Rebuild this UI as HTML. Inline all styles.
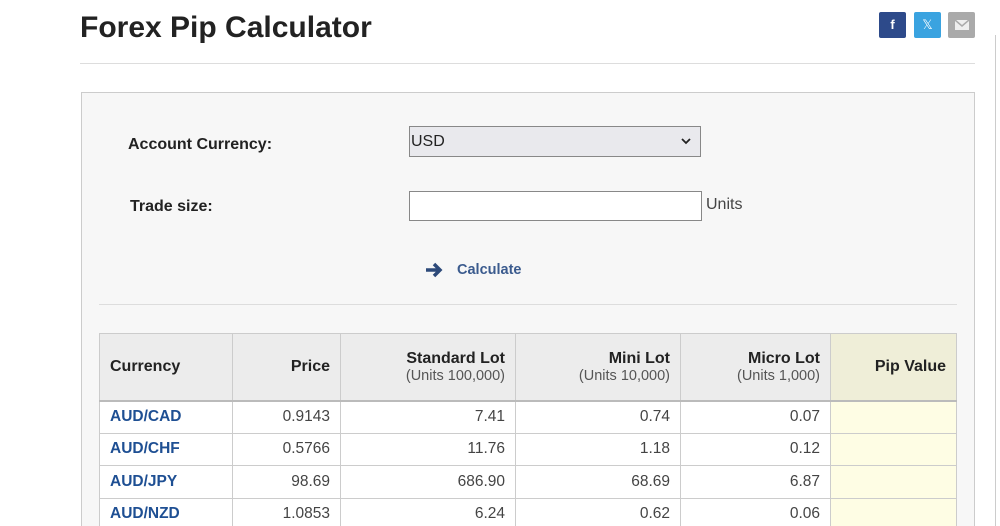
<!DOCTYPE html>
<html><head><style>
*{margin:0;padding:0;box-sizing:border-box}
html,body{width:1000px;height:526px;overflow:hidden}
body{background:#fff;font-family:"Liberation Sans",Arial,sans-serif;position:relative}
.abs{position:absolute}
h1{position:absolute;left:80px;top:11px;font-size:30px;font-weight:bold;color:#222}
.soc{position:absolute;top:12px;width:27px;height:26px;border-radius:2px;color:#fff;font-size:13px;font-weight:bold;text-align:center;line-height:26px}
.panel{position:absolute;left:81px;top:92px;width:894px;height:450px;background:#f7f7f7;border:1px solid #ccc}
.lbl{position:absolute;font-size:16px;font-weight:bold;color:#222}
table{position:absolute;left:99px;top:333px;border-collapse:collapse;font-size:15.5px;width:858px}
td,th{border:1px solid #ccc;height:32.5px;padding:0 10px;text-align:right;color:#444}
th{background:#ececec;height:67px;color:#222;font-weight:bold;border-bottom:2px solid #bbb;font-size:16px}
th small{display:block;font-weight:normal;color:#555;font-size:14.5px}
td:first-child,th:first-child{text-align:left}
td:first-child{color:#1e4f93;font-weight:bold;background:#fff}
td{background:#fff}
td.y{background:#fefde4}
th.y{background:#efeed8}
</style></head><body>
<h1>Forex Pip Calculator</h1>
<div class="soc" style="left:879px;background:#2d4a8a">f</div>
<div class="soc" style="left:914px;background:#3aa3e0;font-weight:normal">𝕏</div>
<div class="soc" style="left:948px;background:#aaa"><svg width="14" height="10" viewBox="0 0 14 10" style="margin-top:8px"><rect width="14" height="10" fill="#eee"/><path d="M0 0L7 6L14 0" stroke="#aaa" fill="none" stroke-width="1.5"/></svg></div>
<div class="abs" style="left:80px;top:63px;width:895px;height:1px;background:#ddd"></div>
<div class="abs" style="left:995px;top:35px;width:1px;height:491px;background:#ccc"></div>
<div class="panel"></div>
<div class="lbl" style="left:128px;top:136px">Account Currency:</div>
<div class="lbl" style="left:130px;top:198px">Trade size:</div>
<div class="abs" style="left:409px;top:126px;width:292px;height:31px;background:#e9e9ed;border:1px solid #888;font-size:16px;color:#222;padding:6px 0 0 1px">USD<svg style="position:absolute;right:9px;top:11px" width="10" height="7" viewBox="0 0 10 7"><path d="M1 1L5 5L9 1" stroke="#222" stroke-width="1.8" fill="none"/></svg></div>
<div class="abs" style="left:409px;top:191px;width:293px;height:30px;background:#fff;border:1px solid #888"></div>
<div class="abs" style="left:706px;top:196px;font-size:16px;color:#444">Units</div>
<div class="abs" style="left:424px;top:262px"><svg width="20" height="16" viewBox="0 0 20 16"><path d="M2 8H16M10 2L16 8L10 14" stroke="#2d4a7a" stroke-width="3.5" fill="none"/></svg></div>
<div class="abs" style="left:457px;top:262px;font-size:14.5px;font-weight:bold;color:#3b5b8e">Calculate</div>
<div class="abs" style="left:99px;top:304px;width:858px;height:1px;background:#ddd"></div>
<table>
<tr><th style="width:133px">Currency</th><th style="width:108px">Price</th><th style="width:175px">Standard Lot<small>(Units 100,000)</small></th><th style="width:165px">Mini Lot<small>(Units 10,000)</small></th><th style="width:150px">Micro Lot<small>(Units 1,000)</small></th><th class="y">Pip Value</th></tr>
<tr><td>AUD/CAD</td><td>0.9143</td><td>7.41</td><td>0.74</td><td>0.07</td><td class="y"></td></tr>
<tr><td>AUD/CHF</td><td>0.5766</td><td>11.76</td><td>1.18</td><td>0.12</td><td class="y"></td></tr>
<tr><td>AUD/JPY</td><td>98.69</td><td>686.90</td><td>68.69</td><td>6.87</td><td class="y"></td></tr>
<tr><td>AUD/NZD</td><td>1.0853</td><td>6.24</td><td>0.62</td><td>0.06</td><td class="y"></td></tr>
</table>
</body></html>
